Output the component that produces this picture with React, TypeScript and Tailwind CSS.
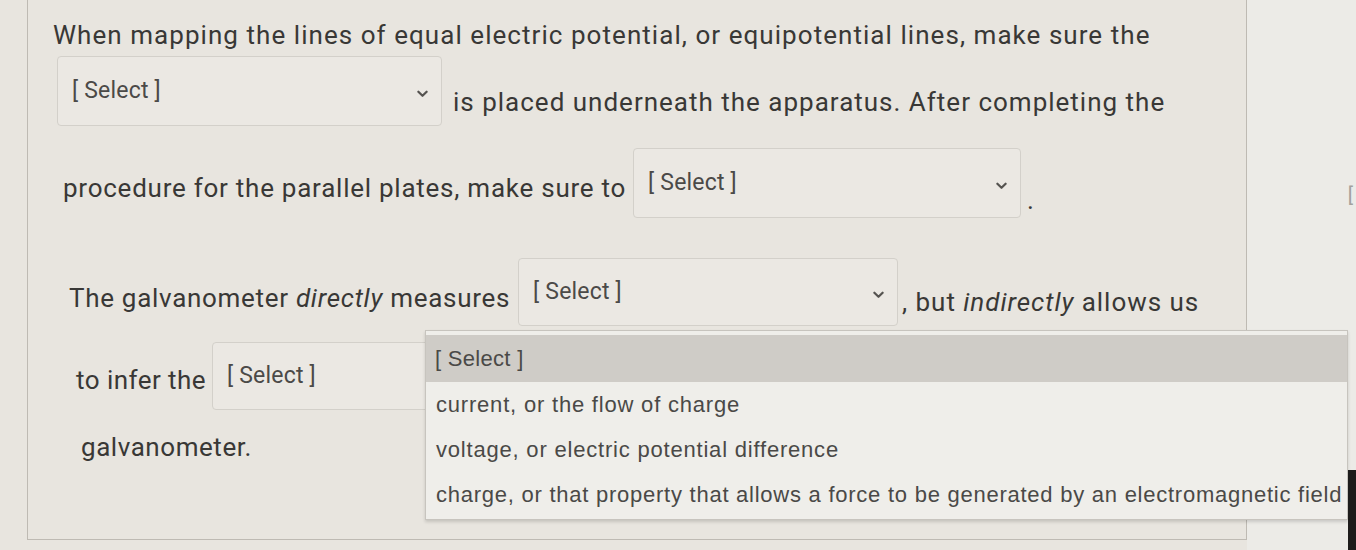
import React from 'react';

const Chevron: React.FC = () => (
  <svg viewBox="0 0 12 8" className="w-[11px] h-[8px] mt-[6px] text-[#555350]" fill="none" stroke="currentColor" strokeWidth={2.4} strokeLinecap="round" strokeLinejoin="round">
    <path d="M1.5 1.5 L6 6 L10.5 1.5" />
  </svg>
);

const SelectBox: React.FC<{ width: string; height: string }> = ({ width, height }) => (
  <div className={`${width} ${height} shrink-0 flex items-center justify-between pl-[14px] pr-[13px] border border-[#d3d0ca] rounded-[4px] bg-[#ebe8e3]`}>
    <span className="text-[23px] tracking-[0.2px] text-[#4b4a48] font-['Roboto',sans-serif]">[ Select ]</span>
    <Chevron />
  </div>
);

const options = [
  'current, or the flow of charge',
  'voltage, or electric potential difference',
  'charge, or that property that allows a force to be generated by an electromagnetic field',
];

export default function App() {
  return (
    <div className="relative w-[1356px] h-[550px] overflow-hidden bg-[#e8e5df] flex font-['Roboto',sans-serif] text-[26px] text-[#393836]">
      <div className="ml-[27px] w-[1220px] h-[540px] shrink-0 border-l border-r border-b border-[#bebab3] flex flex-col">
        <div className="mt-[14px] h-[42px] flex items-center pl-[25px] tracking-[1.05px] whitespace-nowrap">
          When mapping the lines of equal electric potential, or equipotential lines, make sure the
        </div>

        <div className="h-[70px] flex items-center pl-[29px] whitespace-nowrap">
          <SelectBox width="w-[385px]" height="h-[70px]" />
          <span className="ml-[11px] mt-[22px] tracking-[1px]">is placed underneath the apparatus. After completing the</span>
        </div>

        <div className="mt-[22px] h-[70px] flex items-center pl-[35px] whitespace-nowrap">
          <span className="mt-[10px] mr-[7px] tracking-[0.75px]">procedure for the parallel plates, make sure to</span>
          <SelectBox width="w-[388px]" height="h-[70px]" />
          <span className="ml-[6px] mt-[34px]">.</span>
        </div>

        <div className="mt-[40px] h-[68px] flex items-center pl-[41px] whitespace-nowrap">
          <span className="mt-[12px] mr-[8px] tracking-[0.7px]">
            The galvanometer <em>directly</em> measures
          </span>
          <SelectBox width="w-[380px]" height="h-[68px]" />
          <span className="ml-[4px] mt-[20px] tracking-[0.95px]">
            , but <em>indirectly</em> allows us
          </span>
        </div>

        <div className="mt-[16px] h-[68px] flex items-center pl-[48px] whitespace-nowrap">
          <span className="mt-[8px] mr-[6px] tracking-[0.45px]">to infer the</span>
          <SelectBox width="w-[380px]" height="h-[68px]" />
        </div>

        <div className="mt-[20px] h-[35px] flex items-center pl-[53px] tracking-[0.55px]">galvanometer.</div>
      </div>

      <div className="flex-1 bg-[#ecebe7] flex items-start pt-[180px] justify-end">
        <span className="text-[20px] text-[#a3a19c] mr-[3px]">[</span>
      </div>

      <div className="absolute left-[425px] top-[330px] w-[923px] h-[190px] border border-[#c7c4be] bg-[#efeeea] shadow-[0_2px_3px_rgba(0,0,0,0.15)] font-['Liberation_Sans',Arial,sans-serif] text-[22px] text-[#4a4947] pt-[4px] whitespace-nowrap">
        <div className="h-[47px] bg-[#cfccc7] flex items-center pl-[9px] tracking-[0.3px]">[ Select ]</div>
        {options.map((o, i) => (
          <div key={o} className={`h-[45px] flex items-center pl-[10px] ${i === 2 ? 'tracking-[0.75px]' : 'tracking-[0.8px]'}`}>
            {o}
          </div>
        ))}
      </div>

      <div className="absolute right-0 top-[470px] w-[8px] h-[80px] bg-[#1d1c1b]" />
    </div>
  );
}
